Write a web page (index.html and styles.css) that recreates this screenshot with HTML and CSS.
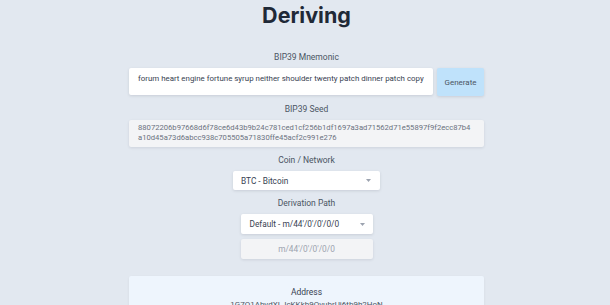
FILE: index.html
```html
<!DOCTYPE html>
<html lang="en">
<head>
  <meta charset="UTF-8">
  <meta name="viewport" content="width=device-width, initial-scale=1.0">
  <title>Deriving</title>
  <link rel="stylesheet" href="styles.css">
</head>
<body>
<div class="page">
  <h1>Deriving</h1>

  <div class="field">
    <label class="label" for="mnemonic">BIP39 Mnemonic</label>
    <div class="mnemonic-row">
      <textarea class="mnemonic" id="mnemonic" rows="1">forum heart engine fortune syrup neither shoulder twenty patch dinner patch copy</textarea>
      <button class="generate">Generate</button>
    </div>
  </div>

  <div class="field">
    <div class="label">BIP39 Seed</div>
    <div class="seed">88072206b97668d6f78ce6d43b9b24c781ced1cf256b1df1697a3ad71562d71e55897f9f2ecc87b4 a10d45a73d6abcc938c705505a71830ffe45acf2c991e276</div>
  </div>

  <div class="field">
    <div class="label">Coin / Network</div>
    <div class="select coin">
      <span>BTC - Bitcoin</span>
      <svg class="caret" width="5" height="3" viewBox="0 0 5 3"><path d="M0 0h5L2.5 3z" fill="#9ca3af"/></svg>
    </div>
  </div>

  <div class="field">
    <div class="label">Derivation Path</div>
    <div class="select path">
      <span>Default - m/44'/0'/0'/0/0</span>
      <svg class="caret" width="5" height="3" viewBox="0 0 5 3"><path d="M0 0h5L2.5 3z" fill="#9ca3af"/></svg>
    </div>
    <div class="path-input">m/44'/0'/0'/0/0</div>
  </div>

  <div class="card">
    <div class="card-label">Address</div>
    <div class="address">1G7Q1AbvdXLJcKKkb9QvubrUi6tb9h2HoN</div>
  </div>
</div>
</body>
</html>
```

FILE: styles.css
```css
body {
  margin: 0;
  background-color: #e2e8f0;
  color: #374151;
  font-family: 'Roboto', 'Inter', sans-serif;
  overflow: hidden;
}
.page {
  width: 355px;
  margin: 0 0 0 129px;
  display: flex;
  flex-direction: column;
  align-items: center;
}
h1 {
  margin: 2px 0 0;
  font-family: 'Inter', sans-serif;
  font-size: 21.5px;
  line-height: 26px;
  font-weight: 700;
  color: #1f2937;
}
.field {
  display: flex;
  flex-direction: column;
  align-items: center;
  width: 100%;
}
.field + .field {
  margin-top: 8px;
}
h1 + .field {
  margin-top: 24px;
}
.label {
  font-size: 8.5px;
  line-height: 10px;
  color: #4b5563;
  margin-bottom: 6px;
}
.mnemonic-row {
  display: flex;
  gap: 4px;
  width: 100%;
}
.mnemonic {
  flex: 1;
  height: 27px;
  box-sizing: border-box;
  padding: 5px 9px;
  border: none;
  border-radius: 2px;
  background: white;
  box-shadow: 0 1px 3px rgba(15, 23, 42, 0.12);
  font-family: inherit;
  font-size: 7.9px;
  line-height: 11px;
  color: #374151;
  resize: none;
  overflow: hidden;
  white-space: nowrap;
  outline: none;
}
.generate {
  width: 47px;
  height: 28px;
  border: none;
  border-radius: 2px;
  background: #bfe2fb;
  box-shadow: 0 1px 3px rgba(15, 23, 42, 0.12);
  font-family: inherit;
  font-size: 8px;
  color: #4b5563;
  padding: 0;
  cursor: pointer;
}
.seed {
  width: 100%;
  box-sizing: border-box;
  height: 27px;
  padding: 3px 8px 3px 9px;
  background: #f3f4f6;
  border-radius: 2px;
  box-shadow: 0 1px 3px rgba(15, 23, 42, 0.1);
  font-size: 7.65px;
  line-height: 10px;
  color: #6b7280;
  word-break: break-all;
}
.select {
  display: flex;
  justify-content: space-between;
  align-items: center;
  height: 19px;
  box-sizing: border-box;
  background: white;
  border-radius: 2px;
  box-shadow: 0 1px 3px rgba(15, 23, 42, 0.12);
  font-size: 8.3px;
  color: #374151;
}
.coin {
  width: 147px;
  padding: 0 9px 0 8px;
}
.path {
  width: 132px;
  height: 20px;
  padding: 0 8px 0 9px;
}
.path-input {
  width: 132px;
  height: 20px;
  margin-top: 5px;
  display: flex;
  align-items: center;
  justify-content: center;
  background: #f3f4f6;
  border-radius: 2px;
  box-shadow: 0 1px 3px rgba(15, 23, 42, 0.1);
  font-size: 8.3px;
  color: #9ca3af;
}
.card {
  width: 100%;
  margin-top: 17px;
  padding-top: 10px;
  height: 60px;
  background: #eef5fd;
  border-radius: 2px;
  box-shadow: 0 1px 3px rgba(15, 23, 42, 0.06);
  display: flex;
  flex-direction: column;
  align-items: center;
}
.card-label {
  font-size: 8.5px;
  line-height: 12px;
  color: #374151;
}
.address {
  margin-top: 2px;
  font-size: 8px;
  color: #4b5563;
}
```
